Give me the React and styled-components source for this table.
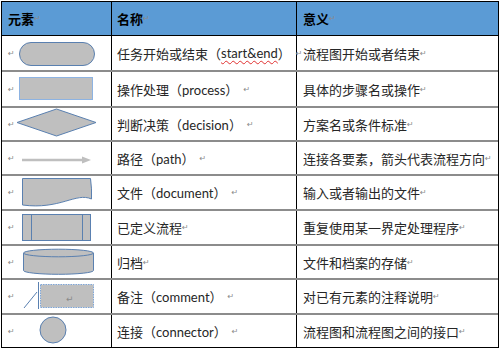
import React from "react";
import styled, { createGlobalStyle } from "styled-components";

const GlobalStyle = createGlobalStyle`
  html, body {
    margin: 0;
    padding: 0;
    background: #ffffff;
  }
  body {
    font-family: Lato, "Noto Sans CJK SC", sans-serif;
  }
`;

const FILL = "#bfbfbf";
const EDGE = "#5a80b0";

const rows = [
  { shape: "terminator", h: 34, name: "任务开始或结束（", latin: "start&end", close: "）", meaning: "流程图开始或者结束", spell: true },
  { shape: "process", h: 36, name: "操作处理（", latin: "process", close: "）", meaning: "具体的步骤名或操作" },
  { shape: "decision", h: 34, name: "判断决策（", latin: "decision", close: "）", meaning: "方案名或条件标准" },
  { shape: "path", h: 34, name: "路径（", latin: "path", close: "）", meaning: "连接各要素，箭头代表流程方向" },
  { shape: "document", h: 35, name: "文件（", latin: "document", close: "）", meaning: "输入或者输出的文件" },
  { shape: "predefined", h: 35, name: "已定义流程", meaning: "重复使用某一界定处理程序" },
  { shape: "archive", h: 34, name: "归档", meaning: "文件和档案的存储" },
  { shape: "comment", h: 35, name: "备注（", latin: "comment", close: "）", meaning: "对已有元素的注释说明" },
  { shape: "connector", h: 34, name: "连接（", latin: "connector", close: "）", meaning: "流程图和流程图之间的接口" },
];

const Shape = ({ kind, h }) => {
  const ch = h;
  switch (kind) {
    case "terminator":
      return (
        <Svg width="93" height={ch}>
          <rect x="1.5" y="6.5" width="75" height="23" rx="11.5" fill={FILL} stroke={EDGE} />
        </Svg>
      );
    case "process":
      return (
        <Svg width="93" height={ch}>
          <rect x="1.5" y="5.5" width="73" height="22" fill={FILL} stroke="#8db3e2" />
        </Svg>
      );
    case "decision":
      return (
        <Svg width="93" height={ch}>
          <polygon points="38.5,1 78,14.5 38.5,28 -1,14.5" fill={FILL} stroke={EDGE} />
        </Svg>
      );
    case "path":
      return (
        <Svg width="93" height={ch}>
          <line x1="4" y1="18" x2="66" y2="18" stroke="#bfbfbf" strokeWidth="2.5" />
          <polygon points="64,14.5 73,18 64,21.5" fill="#bfbfbf" />
        </Svg>
      );
    case "document":
      return (
        <Svg width="93" height={ch}>
          <path d="M4.5 2.5 H72.5 Q74 13 73.5 23 C58 16 42 34 4.5 29 Z" fill={FILL} stroke={EDGE} />
        </Svg>
      );
    case "predefined":
      return (
        <Svg width="93" height={ch}>
          <rect x="4.5" y="3.5" width="68" height="26" fill={FILL} stroke={EDGE} />
          <line x1="13.5" y1="3.5" x2="13.5" y2="29.5" stroke={EDGE} />
          <line x1="64.5" y1="3.5" x2="64.5" y2="29.5" stroke={EDGE} />
        </Svg>
      );
    case "archive":
      return (
        <Svg width="93" height={ch}>
          <path d="M5.5 7 V24.5 A35 3.8 0 0 0 75.5 24.5 V7" fill={FILL} stroke={EDGE} />
          <ellipse cx="40.5" cy="7" rx="35" ry="3.8" fill={FILL} stroke={EDGE} />
        </Svg>
      );
    case "comment":
      return (
        <Svg width="93" height={ch}>
          <line x1="6" y1="28" x2="19" y2="12" stroke={EDGE} />
          <line x1="20.5" y1="2" x2="20.5" y2="29" stroke={EDGE} />
          <rect x="22.5" y="4.5" width="53" height="23" fill={FILL} stroke="#7ea6d8" strokeDasharray="1.5 1" />
          <text x="48" y="22" fontSize="9" fill="#8a8a8a" fontFamily="DejaVu Sans">↵</text>
        </Svg>
      );
    case "connector":
      return (
        <Svg width="93" height={ch}>
          <circle cx="35" cy="15" r="13" fill={FILL} stroke={EDGE} />
        </Svg>
      );
    default:
      return null;
  }
};

export default function App() {
  return (
    <>
      <GlobalStyle />
      <Page>
        <Table>
          <HeaderRow>
            <HeadCell $pad={6}>元素<Mark>↵</Mark></HeadCell>
            <HeadCell $pad={5}>名称<Mark>↵</Mark></HeadCell>
            <HeadCell $pad={6} $last>意义<Mark>↵</Mark></HeadCell>
          </HeaderRow>
          {rows.map((r, i) => {
            const inner = i === 0 ? r.h : r.h - 2;
            return (
              <Row key={r.shape} $h={r.h} $first={i === 0}>
                <ShapeCell>
                  <Mark $lead>↵</Mark>
                  <Shape kind={r.shape} h={inner} />
                </ShapeCell>
                <TextCell $pad={5}>
                  {r.name}
                  {r.latin && (r.spell ? <Spell>{r.latin}</Spell> : r.latin)}
                  {r.close}
                  <Mark $gap={!!r.latin}>↵</Mark>
                </TextCell>
                <TextCell $pad={6} $last>
                  {r.meaning}
                  <Mark>↵</Mark>
                </TextCell>
              </Row>
            );
          })}
        </Table>
      </Page>
    </>
  );
}

const Page = styled.div`
  padding: 1px 0 0 1px;
`;

const Table = styled.div`
  width: 498px;
  box-sizing: border-box;
  border: 1px solid #000;
`;

const HeaderRow = styled.div`
  display: grid;
  grid-template-columns: 110px 185px 201px;
  height: 34px;
  box-sizing: border-box;
  background: #5b9bd5;
  border-bottom: 1px solid #000;
`;

const HeadCell = styled.div`
  display: flex;
  align-items: center;
  padding-left: ${(p) => p.$pad}px;
  box-sizing: border-box;
  border-right: ${(p) => (p.$last ? "none" : "1px solid #000")};
  font-size: 13px;
  font-weight: 700;
  color: #000;
  font-family: "Noto Sans CJK SC", sans-serif;
`;

const Row = styled.div`
  display: grid;
  grid-template-columns: 110px 185px 201px;
  height: ${(p) => p.$h}px;
  box-sizing: border-box;
  border-top: ${(p) => (p.$first ? "none" : "2px solid #8c8c8c")};
`;

const Cell = styled.div`
  display: flex;
  align-items: center;
  box-sizing: border-box;
  border-right: ${(p) => (p.$last ? "none" : "1px solid #000")};
  white-space: nowrap;
`;

const ShapeCell = styled(Cell)`
  padding-left: 6px;
`;

const TextCell = styled(Cell)`
  padding-left: ${(p) => p.$pad}px;
  font-size: 13px;
  color: #262626;
  font-family: Lato, "Noto Sans CJK SC", sans-serif;
`;

const Svg = styled.svg`
  display: block;
  flex: none;
  overflow: visible;
`;

const Mark = styled.span`
  display: inline-block;
  width: ${(p) => (p.$lead ? "10px" : "auto")};
  margin-left: ${(p) => (p.$gap ? "5px" : "0")};
  font-family: "DejaVu Sans", sans-serif;
  font-size: 8px;
  font-weight: 400;
  color: #8a8a8a;
  flex: none;
`;

const Spell = styled.span`
  text-decoration: underline wavy #e03030;
  text-decoration-thickness: 1px;
  text-underline-offset: 2px;
`;
